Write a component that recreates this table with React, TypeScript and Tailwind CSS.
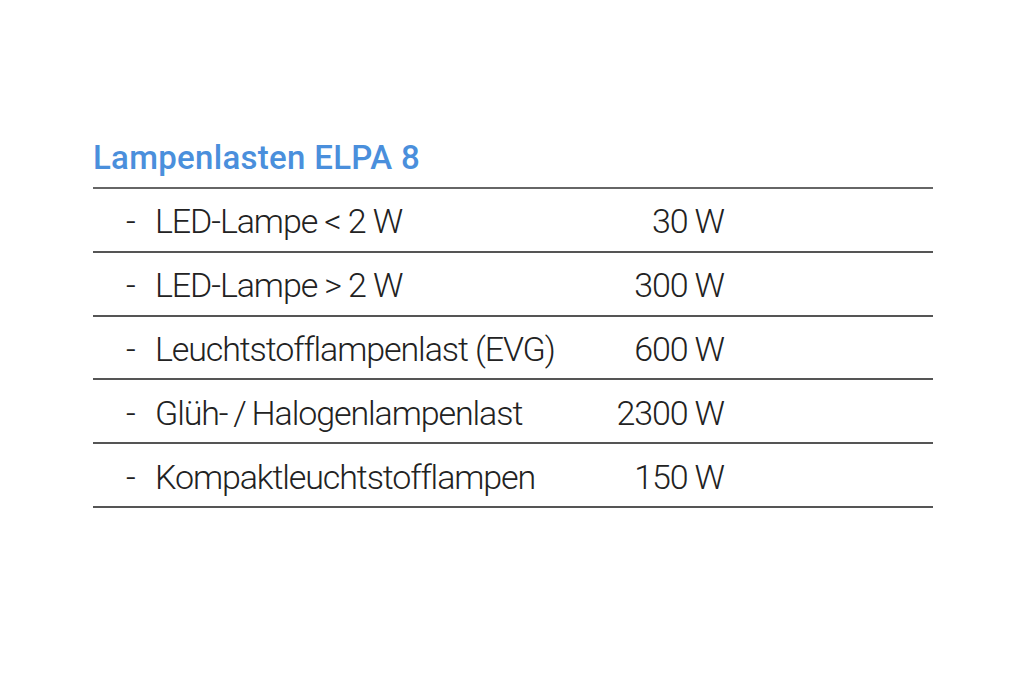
import React from "react";

const rows: [string, string][] = [
  ["LED-Lampe < 2 W", "30 W"],
  ["LED-Lampe > 2 W", "300 W"],
  ["Leuchtstofflampenlast (EVG)", "600 W"],
  ["Glüh-\u2009/\u2009Halogenlampenlast", "2300 W"],
  ["Kompaktleuchtstofflampen", "150 W"],
];

export default function App() {
  return (
    <div className="w-[1024px] h-[683px] bg-white" style={{ fontFamily: "Roboto, 'Liberation Sans', sans-serif" }}>
      <div className="pl-[93px] pt-[136px] w-[933px]">
        <h1 className="text-[33px] leading-[40px] pt-[2px] font-medium text-[#4a8fdc] h-[51px] tracking-[0.3px]">Lampenlasten ELPA 8</h1>
        <div className="border-t-2 border-[#666]">
          {rows.map(([label, value]) => (
            <div key={label} className="h-[63.8px] pt-[4px] border-b-2 border-[#555] flex items-center text-[34px] font-light text-[#222] tracking-[-1.1px] whitespace-nowrap">
              <span className="w-[62px] pl-[33px]">-</span>
              <span className="flex-1">{label}</span>
              <span className="w-[170px] text-right pr-[209px] box-content">{value}</span>
            </div>
          ))}
        </div>
      </div>
    </div>
  );
}
